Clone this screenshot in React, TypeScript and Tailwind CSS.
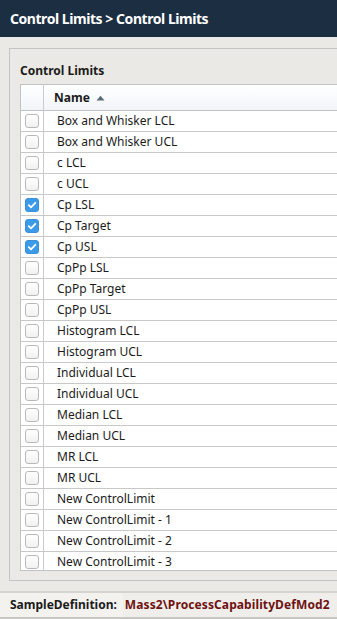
import React from "react";

const rows: [string, boolean][] = [
  ["Box and Whisker LCL", false],
  ["Box and Whisker UCL", false],
  ["c LCL", false],
  ["c UCL", false],
  ["Cp LSL", true],
  ["Cp Target", true],
  ["Cp USL", true],
  ["CpPp LSL", false],
  ["CpPp Target", false],
  ["CpPp USL", false],
  ["Histogram LCL", false],
  ["Histogram UCL", false],
  ["Individual LCL", false],
  ["Individual UCL", false],
  ["Median LCL", false],
  ["Median UCL", false],
  ["MR LCL", false],
  ["MR UCL", false],
  ["New ControlLimit", false],
  ["New ControlLimit - 1", false],
  ["New ControlLimit - 2", false],
  ["New ControlLimit - 3", false],
];

function Box({ checked }: { checked: boolean }) {
  if (checked) {
    return (
      <div className="w-[14px] h-[14px] rounded-[3px] bg-[#3c9be8] border border-[#3a8fd6] flex items-center justify-center">
        <svg width="10" height="10" viewBox="0 0 10 10">
          <path d="M1.8 5.2 L4 7.3 L8.3 2.8" stroke="white" strokeWidth="1.8" fill="none" strokeLinecap="round" strokeLinejoin="round" />
        </svg>
      </div>
    );
  }
  return (
    <div className="w-[14px] h-[14px] rounded-[3px] border border-[#b9b9b9] bg-gradient-to-b from-white to-[#f1f1f1]" />
  );
}

export default function App() {
  return (
    <div
      className="w-[337px] h-[619px] bg-[#ebe9e5] flex flex-col overflow-hidden text-[#1b1b1b]"
      style={{ fontFamily: '"Noto Sans", "Open Sans", sans-serif' }}
    >
      <div className="h-[37px] shrink-0 bg-[#1c2e42] text-white font-bold text-[14px] pl-[10px] flex items-center tracking-[-0.45px]">
        Control Limits &gt; Control Limits
      </div>
      <div className="flex-1 pl-[9px] pt-[11px] pb-[10px] flex flex-col">
        <div className="w-[340px] h-[533px] border border-r-0 border-[#c4c4c4] pl-[10px] flex flex-col overflow-hidden">
          <div className="h-[35px] flex items-end pb-[4px] text-[12px] font-bold">Control Limits</div>
          <div className="w-[330px] h-[487px] border border-r-0 border-[#c0c4c8] bg-white overflow-hidden">
            <div className="h-[26px] flex border-b border-[#c0c4c8] bg-gradient-to-b from-white to-[#f1f5f8]">
              <div className="w-[23px] border-r border-[#c8ccd0]" />
              <div className="flex items-center pl-[10px] text-[12px] font-bold gap-[6px]">
                Name
                <svg width="9" height="6" viewBox="0 0 9 6">
                  <path d="M0.5 5.5 L4.5 0.8 L8.5 5.5 Z" fill="#5b6b7a" />
                </svg>
              </div>
            </div>
            {rows.map(([name, checked]) => (
              <div key={name} className="h-[21px] flex border-b border-[#c8c8c8]">
                <div className="w-[23px] border-r border-[#c8ccd0] flex items-center justify-center">
                  <Box checked={checked} />
                </div>
                <div className="flex items-center pl-[13px] text-[12px]">{name}</div>
              </div>
            ))}
          </div>
        </div>
      </div>
      <div className="h-[2px] bg-[#d6d4d0]" />
      <div className="h-[24px] shrink-0 bg-[#efeeea] flex items-center text-[12px] font-bold">
        <div className="pl-[10px] pr-[6px] h-full flex items-center bg-[#f3f2ef]">SampleDefinition:</div>
        <div className="pl-[2px] h-full flex items-center text-[#6e1212] tracking-[0.1px]">Mass2\ProcessCapabilityDefMod2</div>
      </div>
      <div className="h-[2px] bg-[#c8c6c2]" />
    </div>
  );
}
